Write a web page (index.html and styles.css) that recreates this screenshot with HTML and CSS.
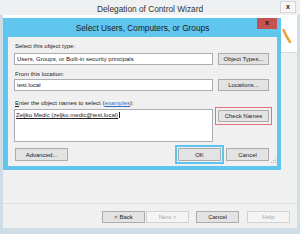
FILE: index.html
```html
<!DOCTYPE html>
<html>
<head>
<meta charset="utf-8">
<link rel="stylesheet" href="styles.css">
</head>
<body>
<div class="wizard">
  <div class="wz-titlebar">
    <span class="wz-title">Delegation of Control Wizard</span>
    <span class="wz-close">x</span>
  </div>
  <div class="wz-client">
    <div class="wz-header">
      <svg class="wz-icon" width="16" height="38" viewBox="0 0 16 38"><path d="M2.5 15 Q5 21 9 27" stroke="#e9a43c" stroke-width="2.6" fill="none" stroke-linecap="round"/></svg>
    </div>
    <div class="wz-body"></div>
    <div class="wz-footer">
      <button class="btn wz-btn">&lt; Back</button>
      <button class="btn wz-btn disabled">Next &gt;</button>
      <button class="btn wz-btn gap7">Cancel</button>
      <button class="btn wz-btn disabled gap8">Help</button>
    </div>
  </div>

  <div class="dialog">
    <div class="dlg-titlebar">
      <span></span>
      <span class="dlg-title">Select Users, Computers, or Groups</span>
      <span class="dlg-close">x</span>
    </div>
    <div class="dlg-content">
      <div class="label l1">Select this object type:</div>
      <div class="row">
        <div class="textbox">Users, Groups, or Built-in security principals</div>
        <button class="btn side-btn">Object Types...</button>
      </div>
      <div class="label l2">From this location:</div>
      <div class="row r2">
        <div class="textbox">test.local</div>
        <button class="btn side-btn">Locations...</button>
      </div>
      <div class="label l3"><u>E</u>nter the object names to select (<a class="link">examples</a>):</div>
      <div class="row r3">
        <div class="textarea"><span class="resolved">Zeljko Medic (zeljko.medic@test.local)</span></div>
        <button class="btn side-btn check">Check Names</button>
      </div>
      <div class="row bottom">
        <button class="btn adv">Advanced...</button>
        <button class="btn ok">OK</button>
        <button class="btn cancel">Cancel</button>
      </div>
      <svg class="grip" width="5" height="5" viewBox="0 0 5 5"><rect x="4" y="0" width="1" height="1" fill="#b5b5b5"/><rect x="2" y="2" width="1" height="1" fill="#b5b5b5"/><rect x="4" y="2" width="1" height="1" fill="#b5b5b5"/><rect x="0" y="4" width="1" height="1" fill="#b5b5b5"/><rect x="2" y="4" width="1" height="1" fill="#b5b5b5"/><rect x="4" y="4" width="1" height="1" fill="#b5b5b5"/></svg>
    </div>
  </div>
</div>
</body>
</html>
```
FILE: styles.css
```css
html, body {
  margin: 0;
  padding: 0;
}
body {
  width: 300px;
  height: 234px;
  overflow: hidden;
  font-family: "Liberation Sans", Arial, sans-serif;
  background: #cddde6;
}
.wizard {
  position: relative;
  width: 300px;
  height: 234px;
  box-sizing: border-box;
  padding: 0 3px 6px 3px;
  background: #cfdee6;
  display: flex;
  flex-direction: column;
}
.wz-titlebar {
  height: 15px;
  margin: 0 -3px;
  background: #eef0f1;
  display: flex;
  align-items: center;
  justify-content: center;
  position: relative;
  flex: none;
}
.wz-title {
  font-size: 8.3px;
  color: #333;
  margin-top: 2px;
}
.wz-close {
  position: absolute;
  right: 4px;
  top: 1px;
  width: 14px;
  height: 10px;
  border: 1px solid #d6d6d6;
  background: #f7f7f7;
  font-size: 7px;
  font-weight: bold;
  line-height: 9px;
  text-align: center;
  color: #222;
}
.wz-client {
  flex: 1;
  display: flex;
  flex-direction: column;
  background: #f0f0f0;
}
.wz-header {
  height: 37px;
  background: #ffffff;
  border-bottom: 1px solid #dadada;
  display: flex;
  justify-content: flex-end;
  flex: none;
}
.wz-icon {
  display: block;
}
.wz-body {
  flex: 1;
}
.wz-footer {
  height: 25px;
  box-sizing: border-box;
  border-top: 1px solid #dfdfdf;
  display: flex;
  justify-content: flex-end;
  align-items: flex-start;
  padding: 7px 7px 0 0;
  flex: none;
}
.btn {
  font-family: "Liberation Sans", Arial, sans-serif;
  font-size: 6px;
  color: #222;
  background: #e3e3e3;
  border: 1px solid #acacac;
  padding: 0;
  margin: 0;
  box-sizing: border-box;
  line-height: 10px;
}
.wz-btn {
  width: 43px;
  height: 12px;
  margin-left: 1px;
}
.wz-btn.gap7 { margin-left: 7px; }
.wz-btn.gap8 { margin-left: 8px; }
.btn.disabled {
  background: #f4f4f4;
  border-color: #d2d2d2;
  color: #a8a8a8;
}

/* Select dialog */
.dialog {
  position: absolute;
  left: 3px;
  top: 18px;
  width: 278px;
  height: 152px;
  box-sizing: border-box;
  background: #60c6ee;
  padding: 0 4px 4px 5px;
  display: flex;
  flex-direction: column;
}
.dlg-titlebar {
  height: 19px;
  display: grid;
  grid-template-columns: 1fr auto 1fr;
  flex: none;
}
.dlg-title {
  font-size: 8.3px;
  color: #1a1a1a;
  align-self: center;
  margin-top: 1px;
}
.dlg-close {
  justify-self: end;
  width: 20px;
  height: 11px;
  background: #c75050;
  color: #1a1a1a;
  font-size: 7px;
  font-weight: bold;
  line-height: 10px;
  text-align: center;
}
.dlg-content {
  flex: 1;
  position: relative;
  background: #f0f0f0;
  padding: 4px 0 0 6px;
  display: flex;
  flex-direction: column;
}
.label {
  font-size: 6px;
  line-height: 8px;
  height: 8px;
  color: #222;
  padding-left: 1px;
  white-space: nowrap;
}
.label.l1 { margin-top: 1px; }
.label.l2 { margin-top: 5px; }
.label.l3 { margin-top: 8px; }
.link {
  color: #2a6ed4;
  text-decoration: underline;
}
.row {
  display: flex;
  align-items: flex-start;
  margin-top: 3px;
}
.row.r2 { margin-top: 1px; }
.row.r3 { margin-top: 2px; }
.textbox {
  width: 199px;
  height: 12px;
  box-sizing: border-box;
  background: #fff;
  border: 1px solid #abadb3;
  font-size: 6px;
  line-height: 10px;
  padding-left: 2px;
  color: #222;
  white-space: nowrap;
}
.side-btn {
  width: 51px;
  height: 12px;
  margin-left: 5px;
}
.side-btn.check {
  margin-top: 1px;
  outline: 1px solid #e6707c;
  outline-offset: 2px;
}
.textarea {
  width: 199px;
  height: 33px;
  box-sizing: border-box;
  background: #fff;
  border: 1px solid #abadb3;
  font-size: 6px;
  line-height: 7px;
  padding: 2px 0 0 1px;
  color: #222;
  white-space: nowrap;
}
.resolved {
  text-decoration: underline;
  border-right: 1px solid #222;
  padding-right: 1px;
}
.row.bottom {
  margin-top: 6px;
}
.adv {
  width: 53px;
  height: 13px;
  margin-left: 1px;
}
.ok {
  width: 43px;
  height: 13px;
  margin-left: 110px;
  outline: 2px solid #5cc4ee;
  outline-offset: 1px;
}
.cancel {
  width: 43px;
  height: 13px;
  margin-left: 5px;
}
.grip {
  position: absolute;
  right: 1px;
  bottom: 3px;
}
```
